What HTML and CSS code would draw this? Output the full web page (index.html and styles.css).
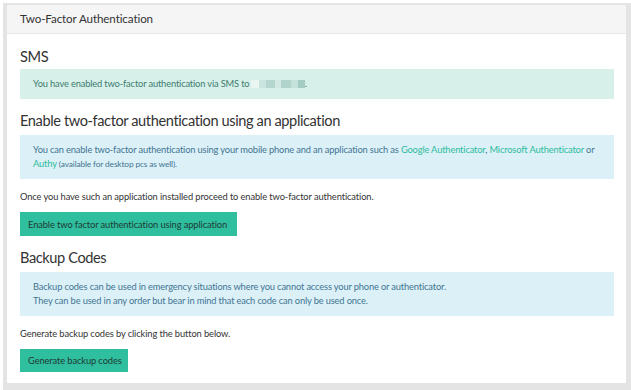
FILE: index.html
```html
<!DOCTYPE html>
<html>
<head>
<meta charset="utf-8">
<link rel="stylesheet" href="styles.css">
</head>
<body>
<div class="frame">
  <div class="panel">
    <div class="panel-heading">Two-Factor Authentication</div>
    <div class="panel-body">
      <h3 class="section-title first">SMS</h3>
      <div class="alert alert-success">You have enabled two-factor authentication via SMS to <span class="masked"><span class="m1"></span><span class="m2"></span><span class="m3"></span><span class="m4"></span><span class="m5"></span><span class="m6"></span><span class="m7"></span></span>.</div>

      <h3 class="section-title">Enable two-factor authentication using an application</h3>
      <div class="alert alert-info">You can enable two-factor authentication using your mobile phone and an application such as <a href="#">Google Authenticator</a>, <a href="#">Microsoft Authenticator</a> or<br><a href="#">Authy</a> <small>(available for desktop pcs as well).</small></div>
      <p class="note">Once you have such an application installed proceed to enable two-factor authentication.</p>
      <button class="btn btn-wide">Enable two factor authentication using application</button>

      <h3 class="section-title">Backup Codes</h3>
      <div class="alert alert-info">Backup codes can be used in emergency situations where you cannot access your phone or authenticator.<br>They can be used in any order but bear in mind that each code can only be used once.</div>
      <p class="note">Generate backup codes by clicking the button below.</p>
      <button class="btn btn-small">Generate backup codes</button>
    </div>
  </div>
</div>
</body>
</html>
```

FILE: styles.css
```css
html, body {
  margin: 0;
  padding: 0;
  background: #ffffff;
}
body {
  font-family: Lato, "Noto Sans", sans-serif;
  color: #333333;
}
.frame {
  margin: 3px 0 0 3px;
  background: #e4e4e4;
  padding: 2px 5px 7px 4px;
}
.panel {
  background: #ffffff;
  height: 378px;
  box-sizing: border-box;
}
.panel-heading {
  height: 28px;
  line-height: 28px;
  background: #f5f5f5;
  border-bottom: 1px solid #e6e6e6;
  padding-left: 13px;
  font-size: 11.6px;
  letter-spacing: -0.1px;
  color: #333333;
}
.panel-body {
  padding: 13px 12px 0 13px;
}
.section-title {
  margin: 12px 0 4px;
  font-size: 14.6px;
  letter-spacing: -0.4px;
  line-height: 20px;
  font-weight: 400;
  color: #333333;
}
.section-title.first {
  margin-top: 0;
  margin-bottom: 2px;
}
.alert {
  font-size: 9.3px;
  letter-spacing: -0.15px;
  line-height: 14px;
  padding: 8px 13px;
  white-space: nowrap;
}
.alert-success {
  background: #d7f0ea;
  color: #3d7b6d;
}
.alert-info {
  background: #dcf0f8;
  color: #3f7591;
}
.alert a {
  color: #2dbc9c;
  text-decoration: none;
}
.alert small {
  font-size: 8.4px;
}
.masked {
  display: inline-flex;
  vertical-align: -1px;
  height: 8px;
  margin-left: -1px;
}
.masked span {
  display: inline-block;
  height: 8px;
}
.m1 { width: 8px; background: #e9f6f2; }
.m2 { width: 7px; background: #c9e4de; }
.m3 { width: 9px; background: #b4d6cf; }
.m4 { width: 6px; background: #d2e9e4; }
.m5 { width: 10px; background: #b0d3cb; }
.m6 { width: 7px; background: #c4e1da; }
.m7 { width: 7px; background: #a3cbc2; }
.note {
  margin: 11px 0 8px;
  font-size: 9.3px;
  letter-spacing: -0.1px;
  line-height: 14px;
  color: #333333;
}
.btn {
  display: block;
  border: 0;
  margin: 0;
  background: #2fbe9e;
  color: #1f3b35;
  font-family: inherit;
  font-size: 9.3px;
  letter-spacing: -0.1px;
  height: 24px;
  padding: 0 8px;
  text-align: left;
  white-space: nowrap;
}
.btn-wide { width: 217px; }
.btn-small { width: 108px; height: 23px; }
```
